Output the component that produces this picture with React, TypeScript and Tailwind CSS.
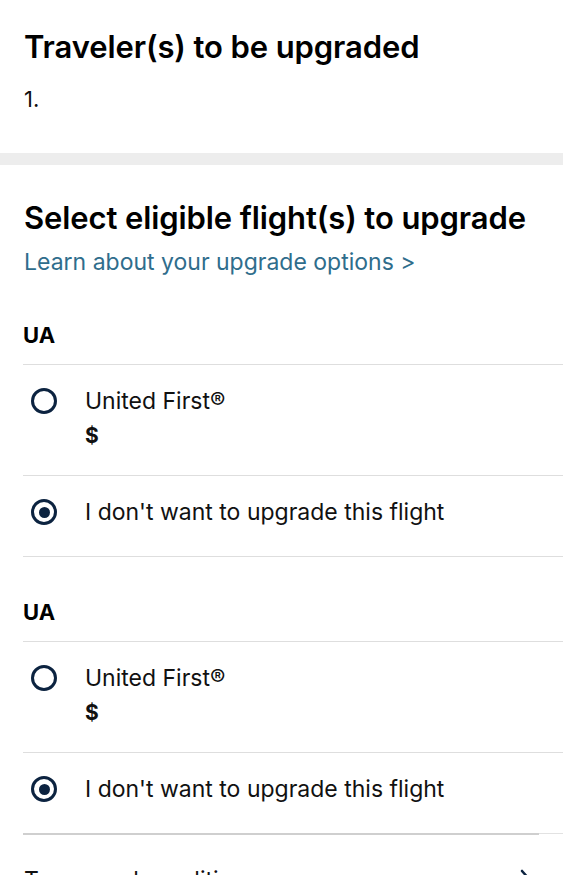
import React from 'react';

interface Flight {
  carrier: string;
  cabin: string;
  price: string;
}

const flights: Flight[] = [
  { carrier: 'UA', cabin: 'United First®', price: '$' },
  { carrier: 'UA', cabin: 'United First®', price: '$' },
];

const Radio: React.FC<{ checked?: boolean }> = ({ checked }) => (
  <span className="flex h-[26px] w-[26px] shrink-0 items-center justify-center rounded-full border-[3px] border-[#0c2340]">
    {checked && <span className="h-[11px] w-[11px] rounded-full bg-[#0c2340]" />}
  </span>
);

const FlightBlock: React.FC<{ flight: Flight; last?: boolean }> = ({ flight, last }) => (
  <div className={last ? '' : 'border-b border-[#dedede]'}>
    <div className="pt-[41px] pb-[15px] text-[22px] font-bold leading-[28px] text-black">{flight.carrier}</div>
    <div className="border-t border-[#dedede] pt-[22px] pb-[25px]">
      <div className="flex items-start">
        <div className="ml-[8px] mt-[1px]">
          <Radio />
        </div>
        <div className="ml-[28px]">
          <p className="text-[23px] leading-[28px] text-[#111]">{flight.cabin}</p>
          <p className="mt-[7px] text-[21px] font-bold leading-[28px] text-[#111]">{flight.price}</p>
        </div>
      </div>
    </div>
    <div className="border-t border-[#dedede] pt-[22px] pb-[30px]">
      <div className="flex items-center">
        <div className="ml-[8px]">
          <Radio checked />
        </div>
        <p className="ml-[28px] text-[23px] leading-[28px] text-[#111]">I don't want to upgrade this flight</p>
      </div>
    </div>
  </div>
);

export default function App() {
  return (
    <div className="min-h-[875px] w-[563px] overflow-hidden bg-white font-['Inter',sans-serif] antialiased">
      <div className="px-6 pt-[29px] pb-[40px]">
        <h1 className="text-[31px] font-semibold leading-[36px] tracking-[-0.1px] text-black">Traveler(s) to be upgraded</h1>
        <p className="mt-[20px] text-[22px] leading-[28px] text-[#111]">1.</p>
      </div>

      <div className="h-[12px] bg-[#ededed]" />

      <div className="pt-[35px] pl-[23px]">
        <div className="pl-px">
          <h2 className="whitespace-nowrap text-[31px] font-semibold leading-[36px] tracking-[-0.1px] text-black">Select eligible flight(s) to upgrade</h2>
          <a href="#" className="mt-[12px] block text-[23px] leading-[28px] text-[#2f6d8c]">
            Learn about your upgrade options &gt;
          </a>
        </div>
        <div className="mt-[4px]">
          {flights.map((f, i) => (
            <FlightBlock key={i} flight={f} last={i === flights.length - 1} />
          ))}
        </div>
        <div className="relative border-t border-[#e2e2e2]">
          <div className="absolute left-0 -top-px h-[2px] w-[516px] bg-[#cfcfcf]" />
          <div className="flex items-center justify-between pt-[32px] pr-[30px] pl-px">
            <span className="text-[23px] leading-[28px] text-[#111]">Terms and conditions</span>
            <svg width="14" height="22" viewBox="0 0 14 22" fill="none" stroke="#0c2340" strokeWidth="2.6" strokeLinecap="round" strokeLinejoin="round">
              <path d="M3 2l8 9-8 9" />
            </svg>
          </div>
        </div>
      </div>
    </div>
  );
}
